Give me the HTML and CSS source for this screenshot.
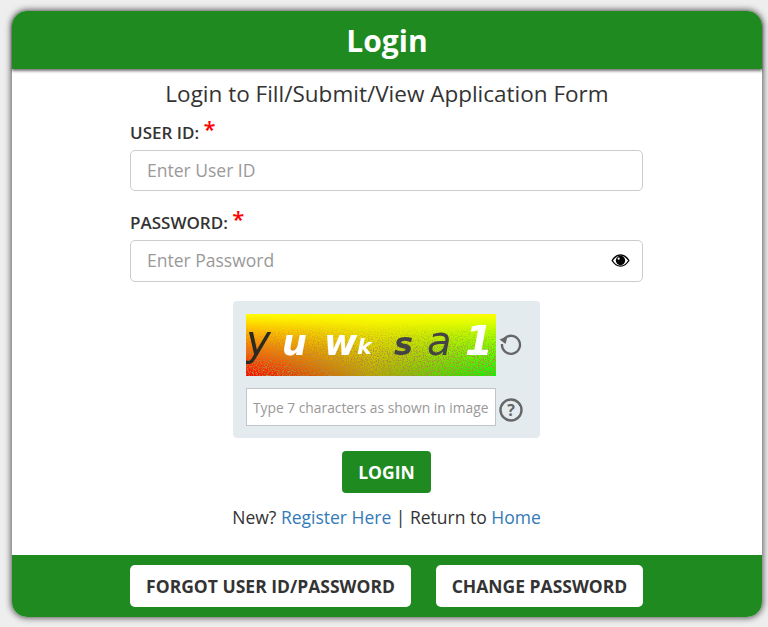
FILE: index.html
```html
<!DOCTYPE html>
<html lang="en">
<head>
<meta charset="utf-8">
<title>Login</title>
<link rel="stylesheet" href="styles.css">
</head>
<body>
<main class="card">
  <header class="card-head"><h1>Login</h1></header>
  <section class="card-body">
    <h2>Login to Fill/Submit/View Application Form</h2>
    <form class="form">
      <label class="field-label label-user" for="uid">USER ID: <span class="req">*</span></label>
      <input class="control" id="uid" type="text" placeholder="Enter User ID">
      <label class="field-label label-pass" for="pwd">PASSWORD: <span class="req">*</span></label>
      <div class="pass-wrap">
        <input class="control" id="pwd" type="text" placeholder="Enter Password">
        <svg class="eye" viewBox="0 0 20 14" aria-hidden="true">
          <path d="M1 7C3.500 3 6.500 1 10 1s6.500 2 9 6c-2.500 4-5.500 6-9 6s-6.500-2-9-6z" fill="#fff" stroke="#000" stroke-width="1.500"/>
          <circle cx="10" cy="7" r="5" fill="#000"/>
          <circle cx="8" cy="5" r="1.200" fill="#fff"/>
        </svg>
      </div>
      <div class="captcha">
        <div class="captcha-row row-image">
          <div class="captcha-img">
            <svg class="noise" aria-hidden="true">
              <filter id="grain"><feTurbulence type="fractalNoise" baseFrequency="0.8" numOctaves="2" seed="4"/><feColorMatrix values="0 0 0 0 0.45  0 0 0 0 0.25  0 0 0 0 0.05  0 0 0 4 -1.800"/></filter>
              <rect width="100%" height="100%" filter="url(#grain)"/>
            </svg>
            <span class="ch ch-y">y</span><span class="ch ch-u">u</span><span class="ch ch-w">w</span><span class="ch ch-k">k</span><span class="ch ch-s">s</span><span class="ch ch-a">a</span><span class="ch ch-1">1</span>
          </div>
          <svg class="tool tool-refresh" viewBox="0 0 24 24" aria-hidden="true">
            <path d="M5.500 7.500A9 9 0 1 1 3 13" fill="none" stroke="#666" stroke-width="2.300"/>
            <path d="M0.500 9.500 L7.500 12.500 L7.500 4.500 Z" fill="#666" transform="rotate(14 5 9)"/>
          </svg>
        </div>
        <div class="captcha-row">
          <input class="captcha-input" type="text" placeholder="Type 7 characters as shown in image">
          <svg class="tool tool-help" viewBox="0 0 24 24" aria-hidden="true">
            <circle cx="12" cy="12" r="10.500" fill="none" stroke="#666" stroke-width="2.400"/>
            <text x="12" y="17.500" text-anchor="middle" class="q">?</text>
          </svg>
        </div>
      </div>
      <button class="btn-login" type="button">LOGIN</button>
      <p class="links">New? <a href="#">Register Here</a> | Return to <a href="#">Home</a></p>
    </form>
  </section>
  <footer class="card-foot">
    <button class="btn-foot btn-forgot" type="button">FORGOT USER ID/PASSWORD</button>
    <button class="btn-foot btn-change" type="button">CHANGE PASSWORD</button>
  </footer>
</main>
</body>
</html>
```
FILE: styles.css
```css
* { box-sizing: border-box; }
html, body { height: 100%; }
body {
  margin: 0;
  padding: 11px 6px 0 12px;
  background: #eeeeee;
  font-family: "Open Sans", "Liberation Sans", sans-serif;
  color: #333;
  overflow: hidden;
}
.card {
  width: 750px;
  height: 606px;
  display: flex;
  flex-direction: column;
  background: #fff;
  border-radius: 15px;
  box-shadow: 0 0 6px 1px rgba(0, 0, 0, 0.65);
}
.card-head {
  position: relative;
  height: 58px;
  flex: none;
  background: #1e8a20;
  border-radius: 15px 15px 0 0;
  box-shadow: 0 2px 3px rgba(0, 0, 0, 0.55);
  display: flex;
  align-items: center;
  justify-content: center;
}
.card-head h1 {
  margin: 2px 0 0;
  color: #fff;
  font-size: 30px;
  line-height: 58px;
  font-weight: 700;
}
.card-body {
  flex: 1;
  display: flex;
  flex-direction: column;
  align-items: center;
}
.card-body h2 {
  margin: 10px 0 0;
  font-size: 22.500px;
  line-height: 30px;
  font-weight: 400;
  color: #333;
}
.form {
  width: 513px;
  margin-right: 1px;
  display: flex;
  flex-direction: column;
  align-items: stretch;
}
.field-label {
  display: block;
  font-size: 17px;
  font-weight: 600;
  line-height: 22px;
  color: #333;
}
.label-user { margin-top: 11px; margin-bottom: 6px; }
.label-pass { margin-top: 19px; margin-bottom: 6px; }
.req {
  color: #f00;
  font-size: 22px;
  line-height: 16px;
  font-weight: 600;
  vertical-align: 2px;
}
.control {
  display: block;
  width: 100%;
  height: 41px;
  padding: 0 16px 2px;
  border: 1px solid #ccc;
  border-radius: 5px;
  background: #fff;
  font: 400 17.500px "Open Sans", "Liberation Sans", sans-serif;
  color: #333;
  outline: none;
}
.control::placeholder { color: #999; opacity: 1; }
.pass-wrap { position: relative; }
.pass-wrap .control { height: 42px; }
.eye {
  position: absolute;
  right: 13px;
  top: 14px;
  width: 19px;
  height: 13px;
}
.captcha {
  align-self: center;
  width: 307px;
  height: 137px;
  margin-top: 19px;
  padding: 13px;
  background: #e4ebef;
  border-radius: 4px;
  display: flex;
  flex-direction: column;
  gap: 12px;
}
.captcha-row {
  display: flex;
  align-items: center;
  gap: 3px;
}
.captcha-img {
  position: relative;
  width: 250px;
  height: 62px;
  flex: none;
  overflow: hidden;
  background:
    linear-gradient(to bottom, #ffff00 0%, rgba(255, 255, 0, 0) 100%),
    linear-gradient(to right, #ff0000 0%, #b8a800 50%, #00ff00 100%);
  font-family: "DejaVu Sans", sans-serif;
}
.noise {
  position: absolute;
  left: 0;
  top: 0;
  width: 100%;
  height: 100%;
  -webkit-mask-image: linear-gradient(to bottom, transparent 15%, #000 70%);
  mask-image: linear-gradient(to bottom, transparent 15%, #000 70%);
}
.ch {
  position: absolute;
  font-style: oblique;
  line-height: 1;
  filter: blur(0.4px);
}
.ch-y { left: 0; top: 6px; font-size: 42px; color: #2a2a20; font-weight: 400; }
.ch-u { left: 36px; top: 12px; font-size: 35px; color: #fff; font-weight: 700; }
.ch-w { left: 78px; top: 11px; font-size: 36px; color: #fff; font-weight: 700; }
.ch-k { left: 111px; top: 22px; font-size: 22px; color: #fff; font-weight: 700; }
.ch-s { left: 148px; top: 14px; font-size: 32px; color: #444; font-weight: 700; }
.ch-a { left: 181px; top: 7px; font-size: 40px; color: #444; font-weight: 400; }
.ch-1 { left: 219px; top: 7px; font-size: 40px; color: #fff; font-weight: 700; }
.tool { width: 24px; height: 24px; flex: none; }
.tool-refresh { position: relative; top: -2px; }
.tool-help { position: relative; top: 3px; }
.q { font: 700 16px "Open Sans", "Liberation Sans", sans-serif; fill: #666; }
.captcha-input {
  display: block;
  width: 250px;
  height: 38px;
  flex: none;
  padding: 0 6px;
  border: 1px solid #bfc5c9;
  background: #fff;
  font: 400 13.800px "Open Sans", "Liberation Sans", sans-serif;
  outline: none;
}
.captcha-input::placeholder { color: #999; opacity: 1; }
.btn-login {
  align-self: center;
  width: 89px;
  height: 42px;
  margin-top: 13px;
  border: 0;
  border-radius: 4px;
  background: #1e8a20;
  color: #fff;
  font: 700 17.500px "Open Sans", "Liberation Sans", sans-serif;
  padding: 0;
}
.links {
  margin: 12px 0 0;
  text-align: center;
  font-size: 17.500px;
  line-height: 24px;
  color: #333;
}
.links a { color: #337ab7; text-decoration: none; }
.card-foot {
  height: 62px;
  flex: none;
  background: #1e8a20;
  border-radius: 0 0 15px 15px;
  display: flex;
  align-items: center;
  justify-content: center;
  gap: 25px;
  padding-right: 1px;
}
.btn-foot {
  height: 42px;
  border: 0;
  border-radius: 5px;
  background: #fff;
  color: #333;
  font: 700 17.500px "Open Sans", "Liberation Sans", sans-serif;
  padding: 0;
}
.btn-forgot { width: 281px; }
.btn-change { width: 207px; }
```
